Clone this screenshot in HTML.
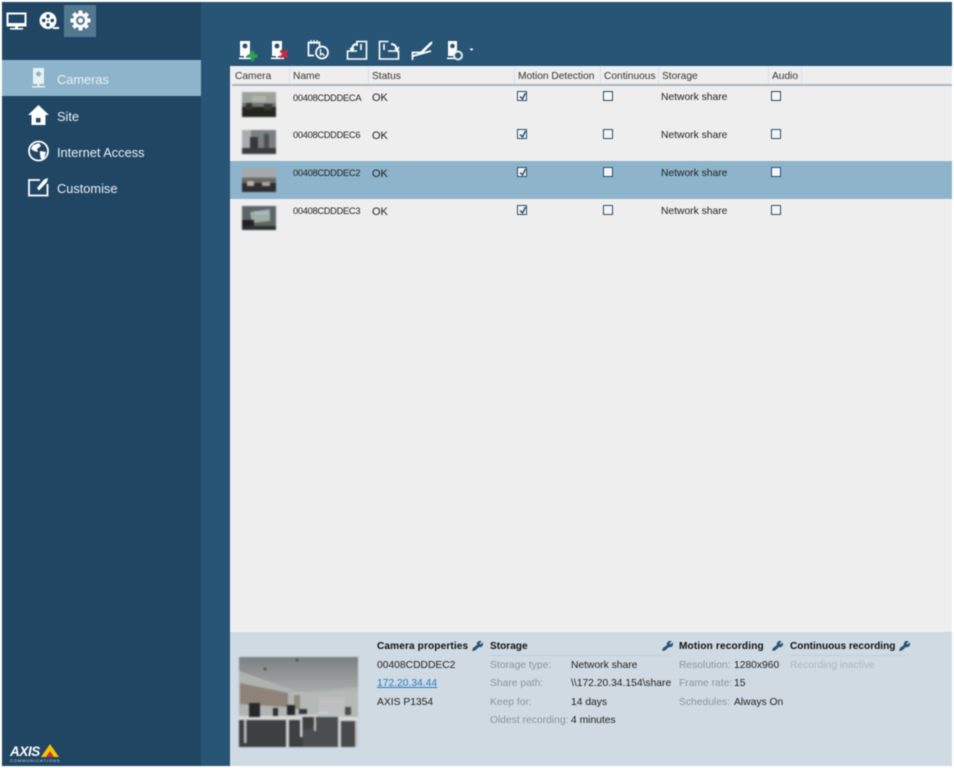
<!DOCTYPE html>
<html><head><meta charset="utf-8">
<style>
html,body{margin:0;padding:0;background:#fff}
#p{position:relative;width:954px;height:768px;overflow:hidden;background:#fff;font-family:"Liberation Sans",sans-serif;font-size:10.3px;color:#222;filter:blur(.45px)}
#p div,#p svg,#p a{position:absolute}
.t{white-space:nowrap;line-height:14px}
.n{color:#e8f0f5;font-size:12.8px;line-height:18px;white-space:nowrap;left:57px}
.h{top:70px;color:#333;font-size:10.2px}
.sep{top:67px;width:1px;height:17px;background:#d6e2ea}
.cb{width:8px;height:8px;border:1.500px solid #2b4f6b;background:#f4f6f7}
.g{color:#8a969e}
.b{font-weight:bold;color:#111;font-size:10.1px}
.id{font-size:9.3px;letter-spacing:-.3px;left:293px}
.ph{filter:blur(.7px)}
</style></head><body><div id="p">
<div style="left:2px;top:2px;width:199px;height:764px;background:#214664"></div>
<div style="left:201px;top:2px;width:751px;height:764px;background:#285475"></div>
<div style="left:230px;top:66px;width:722px;height:566px;background:#eeeeee"></div>
<div style="left:230px;top:632px;width:722px;height:134px;background:#cfdae2"></div>

<!-- top icons -->
<div style="left:64px;top:5px;width:32px;height:32px;background:#527790"></div>
<svg style="left:0;top:0" width="100" height="40" viewBox="0 0 100 40">
<rect x="7.500" y="13.500" width="18" height="12" fill="none" stroke="#fff" stroke-width="2"/>
<rect x="7" y="23" width="19" height="3" fill="#fff"/><rect x="15" y="26" width="3" height="2" fill="#fff"/><rect x="10" y="28" width="13" height="1.600" fill="#fff"/>
<circle cx="48" cy="20.500" r="8.500" fill="#fff"/>
<g fill="#214664"><circle cx="48" cy="16.200" r="1.800"/><circle cx="48" cy="24.800" r="1.800"/><circle cx="43.700" cy="20.500" r="1.800"/><circle cx="52.300" cy="20.500" r="1.800"/><circle cx="48" cy="20.500" r=".8"/></g>
<rect x="53" y="27" width="6" height="2" fill="#fff"/>
<g fill="#fff" transform="translate(80.500 20.500)"><circle r="7.500"/><rect x="-2" y="-10" width="4" height="20"/><rect x="-2" y="-10" width="4" height="20" transform="rotate(45)"/><rect x="-2" y="-10" width="4" height="20" transform="rotate(90)"/><rect x="-2" y="-10" width="4" height="20" transform="rotate(135)"/><circle r="4.500" fill="#527790"/><circle r="2.500"/></g>
</svg>

<!-- sidebar -->
<div style="left:2px;top:60px;width:199px;height:36px;background:#8db4cb"></div>
<svg style="left:26px;top:66px" width="26" height="24" viewBox="0 0 26 24">
<rect x="7" y="2" width="11" height="16" fill="#e9f0f4"/><circle cx="12.500" cy="8" r="2.500" fill="#8db4cb"/><rect x="6" y="20" width="13" height="1.500" fill="#e9f0f4"/><rect x="11.500" y="18" width="2" height="2" fill="#e9f0f4"/>
</svg>
<div class="n" style="top:71px">Cameras</div>
<svg style="left:26px;top:103px" width="26" height="24" viewBox="0 0 26 24">
<path d="M12.500 2 L23 12 H19.500 V22 H5.500 V12 H2 Z" fill="#fff"/><rect x="10" y="15" width="4.500" height="4.500" fill="#214664"/>
</svg>
<div class="n" style="top:108px">Site</div>
<svg style="left:26px;top:139px" width="26" height="24" viewBox="0 0 26 24">
<circle cx="12.500" cy="12" r="9.500" fill="none" stroke="#fff" stroke-width="1.800"/>
<path d="M7 6 L13 4 L15 7 L11 10 L12 13 L8 12 L5 10 Z M14 12 L20 13 L18 19 L15 20 L14 16 Z" fill="#fff"/>
</svg>
<div class="n" style="top:144px">Internet Access</div>
<svg style="left:26px;top:175px" width="26" height="24" viewBox="0 0 26 24">
<path d="M14 5 H3 V20.500 H21.500 V9" fill="none" stroke="#fff" stroke-width="1.800"/>
<path d="M11 13 L18 4.500 L22 3 L21 7 L13 15.500 Z" fill="#fff"/>
</svg>
<div class="n" style="top:180px">Customise</div>

<!-- logo -->
<div class="t" style="left:10px;top:745px;color:#fff;font-weight:bold;font-style:italic;font-size:13.500px;letter-spacing:-.4px">AXIS</div>
<svg style="left:40px;top:742px" width="20" height="18" viewBox="0 0 20 18"><path d="M10 2 L19 15 H1 Z" fill="#f5c400"/><path d="M10 9 L14 15 H6 Z" fill="#c9302c"/></svg>
<div class="t" style="left:10px;top:758px;color:#dde;font-size:4px;line-height:5px;letter-spacing:.95px">COMMUNICATIONS</div>

<!-- toolbar -->
<svg style="left:230px;top:36px" width="260" height="30" viewBox="0 0 260 30" fill="none" stroke="#fff">
<g stroke="none" fill="#fff"><rect x="10" y="5" width="10" height="15"/><circle cx="15" cy="10" r="2.500" fill="#285475"/><rect x="9" y="21.500" width="13" height="1.600"/><rect x="14" y="20" width="2" height="2"/></g>
<path d="M22.500 15v10M17.500 20h10" stroke="#2aa14f" stroke-width="3.500"/>
<g stroke="none" fill="#fff"><rect x="42" y="5" width="10" height="15"/><circle cx="47" cy="10" r="2.500" fill="#285475"/><rect x="41" y="21.500" width="13" height="1.600"/><rect x="46" y="20" width="2" height="2"/></g>
<path d="M50.500 14.500l7 7M57.500 14.500l-7 7" stroke="#d5263b" stroke-width="2.800"/>
<path d="M84 19.500H78.500V6.500H89.500V10" stroke-width="1.700"/><path d="M81 4v4M84 4v4M87 4v4" stroke-width="1.200"/>
<circle cx="92" cy="16.500" r="6" stroke-width="1.700"/><path d="M90.500 13v6l2-1.500 2 2.500" stroke-width="1.300"/>
<path d="M127 10V5.500H136.500V23H117.500V15H127" stroke-width="1.600"/><path d="M122 14c0-4 2-6 5-6" stroke-width="2"/><path d="M120 12l2 3 2-3" stroke-width="1.400"/><path d="M131 8v6" stroke-width="1.600"/>
<path d="M149.500 15V5.500H158.500M149.500 15V23H168.500V15H158" stroke-width="1.600"/><path d="M161 8c3 0 5 2 6 5" stroke-width="2"/><path d="M165 12l2 3 2-4" stroke-width="1.400"/><path d="M154 8v6" stroke-width="1.600"/>
<path d="M182.500 24V16.500H191M183 20L201 15" stroke-width="1.700"/><path d="M190 16L200 6.500 202.500 5 202 8 193 17z" fill="#fff" stroke="none"/>
<g stroke="none" fill="#fff"><rect x="218" y="5" width="9" height="15"/><circle cx="222.500" cy="10" r="2.300" fill="#285475"/><rect x="217" y="21.500" width="11" height="1.600"/></g>
<circle cx="228" cy="19.500" r="4" fill="#285475" stroke="#dfe8ee" stroke-width="2"/>
<path d="M239.500 12.500h4l-2 2.500z" fill="#fff" stroke="none"/>
</svg>

<!-- table header -->
<div style="left:232px;top:84px;width:720px;height:2px;background:#a9b7c0"></div>
<div class="sep" style="left:289px"></div><div class="sep" style="left:368px"></div><div class="sep" style="left:514px"></div><div class="sep" style="left:600px"></div><div class="sep" style="left:658px"></div><div class="sep" style="left:768px"></div><div class="sep" style="left:801px"></div>
<div class="t h" style="left:235px">Camera</div>
<div class="t h" style="left:293px">Name</div>
<div class="t h" style="left:372px">Status</div>
<div class="t h" style="left:518px">Motion Detection</div>
<div class="t h" style="left:604px">Continuous</div>
<div class="t h" style="left:662px">Storage</div>
<div class="t h" style="left:772px">Audio</div>

<!-- selected row -->
<div style="left:230px;top:161px;width:722px;height:38px;background:#8db4cb"></div>

<!-- rows -->
<svg class="ph" style="left:242px;top:92px" width="34" height="25" viewBox="0 0 34 25"><rect width="34" height="25" fill="#6c726e"/><rect y="0" width="34" height="11" fill="#9aa39c"/><rect x="10" y="4" width="14" height="6" fill="#aeb4a6"/><rect y="15" width="34" height="10" fill="#23251f"/><rect x="4" y="11" width="6" height="7" fill="#333"/><rect x="22" y="12" width="8" height="6" fill="#3c3c38"/></svg>
<svg class="ph" style="left:242px;top:130px" width="34" height="24" viewBox="0 0 34 24"><rect width="34" height="24" fill="#7b7f80"/><rect x="0" y="0" width="9" height="24" fill="#a8acae"/><rect x="8" y="7" width="8" height="12" fill="#35383a"/><rect x="22" y="4" width="5" height="16" fill="#4d4f4e"/><rect y="18" width="34" height="6" fill="#3a3c3d"/></svg>
<svg class="ph" style="left:242px;top:168px" width="34" height="24" viewBox="0 0 34 24"><rect width="34" height="24" fill="#8a8f92"/><rect width="34" height="9" fill="#a5a9ab"/><rect y="10" width="34" height="5" fill="#6b6760"/><rect y="15" width="34" height="9" fill="#2c2e30"/><rect x="5" y="13" width="7" height="5" fill="#b4b4b4"/><rect x="20" y="14" width="8" height="4" fill="#a8a8a8"/></svg>
<svg class="ph" style="left:242px;top:206px" width="34" height="24" viewBox="0 0 34 24"><rect width="34" height="24" fill="#5c6466"/><path d="M8 6 L28 3 V15 L10 17Z" fill="#9fae9f"/><rect x="12" y="5" width="14" height="4" fill="#a7b7c9"/><rect y="14" width="12" height="10" fill="#1e2223"/><rect y="20" width="34" height="4" fill="#2c3032"/></svg>

<div class="t id" style="top:91px">00408CDDDECA</div><div class="t" style="left:372px;top:91px;font-size:11px">OK</div>
<div class="t id" style="top:128px">00408CDDDEC6</div><div class="t" style="left:372px;top:129px;font-size:11px">OK</div>
<div class="t id" style="top:166px">00408CDDDEC2</div><div class="t" style="left:372px;top:167px;font-size:11px">OK</div>
<div class="t id" style="top:204px">00408CDDDEC3</div><div class="t" style="left:372px;top:205px;font-size:11px">OK</div>

<div class="t" style="left:661px;top:91px">Network share</div>
<div class="t" style="left:661px;top:129px">Network share</div>
<div class="t" style="left:661px;top:167px">Network share</div>
<div class="t" style="left:661px;top:205px">Network share</div>

<div class="cb" style="left:517px;top:91px"></div><div class="cb" style="left:603px;top:91px"></div><div class="cb" style="left:771px;top:91px"></div>
<div class="cb" style="left:517px;top:129px"></div><div class="cb" style="left:603px;top:129px"></div><div class="cb" style="left:771px;top:129px"></div>
<div class="cb" style="left:517px;top:167px"></div><div class="cb" style="left:603px;top:167px"></div><div class="cb" style="left:771px;top:167px"></div>
<div class="cb" style="left:517px;top:205px"></div><div class="cb" style="left:603px;top:205px"></div><div class="cb" style="left:771px;top:205px"></div>
<svg style="left:517px;top:91px" width="12" height="12" fill="none" stroke="#2b4f6b" stroke-width="1.500"><path d="M3 5.500l2.500 2.500 3-6"/></svg>
<svg style="left:517px;top:129px" width="12" height="12" fill="none" stroke="#2b4f6b" stroke-width="1.500"><path d="M3 5.500l2.500 2.500 3-6"/></svg>
<svg style="left:517px;top:167px" width="12" height="12" fill="none" stroke="#2b4f6b" stroke-width="1.500"><path d="M3 5.500l2.500 2.500 3-6"/></svg>
<svg style="left:517px;top:205px" width="12" height="12" fill="none" stroke="#2b4f6b" stroke-width="1.500"><path d="M3 5.500l2.500 2.500 3-6"/></svg>

<!-- bottom panel -->
<svg class="ph" style="left:239px;top:657px" width="119" height="90" viewBox="0 0 119 90">
<defs><linearGradient id="c" x1="0" y1="0" x2="0" y2="1"><stop offset="0" stop-color="#7b8081"/><stop offset="1" stop-color="#a9adab"/></linearGradient></defs>
<rect width="119" height="90" fill="#b0b4b2"/>
<path d="M0 0H119V30L62 36 0 14Z" fill="url(#c)"/>
<path d="M0 14 L50 34 V38 L0 26Z" fill="#aeb2b0"/>
<path d="M1 26 L49 36 V50 L1 47Z" fill="#8f8279"/>
<path d="M53 35H119V62H53Z" fill="#b4b8b6"/>
<rect x="55" y="38" width="6" height="14" fill="#8f8d78"/>
<rect x="80" y="40" width="26" height="22" fill="#bdc0be"/>
<circle cx="26" cy="12" r="1.300" fill="#3a3e3f"/><circle cx="58" cy="3" r="1.300" fill="#3a3e3f"/>
<rect x="50" y="60" width="50" height="30" fill="#4b4e50"/>
<path d="M0 60H62L64 90H0Z" fill="#3d3f41"/>
<path d="M62 60H80L72 72H62Z" fill="#3d3f41"/>
<rect x="0" y="59" width="62" height="4" fill="#d6d8d7"/>
<rect x="61" y="57.500" width="18" height="2.500" fill="#cfd1d0"/><rect x="79" y="55" width="10" height="2" fill="#cfd1d0"/>
<rect x="99" y="60" width="20" height="5" fill="#d8dad9"/>
<rect x="99" y="64" width="20" height="26" fill="#47494b"/>
<rect x="99" y="62" width="3" height="28" fill="#cfd1d0"/><rect x="116" y="64" width="3" height="26" fill="#bfc1c0"/>
<rect x="47" y="60" width="3" height="30" fill="#d0d2d1"/><rect x="61" y="60" width="2.500" height="20" fill="#d0d2d1"/><rect x="75" y="58" width="2" height="16" fill="#c8cac9"/><rect x="5" y="62" width="2.500" height="24" fill="#bfc1c0"/>
<rect x="10" y="46" width="11" height="14" fill="#25282a"/><rect x="48" y="48" width="8" height="10" fill="#25282a"/><rect x="34" y="51" width="5" height="8" fill="#2c2f30"/><rect x="60" y="52" width="8" height="5" fill="#33363a"/>
<rect x="106" y="50" width="6" height="8" fill="#4a4c4e"/>
</svg>

<div class="t b" style="left:377px;top:640px;letter-spacing:.12px">Camera properties</div>
<div class="t b" style="left:490px;top:640px">Storage</div>
<div class="t b" style="left:679px;top:640px;letter-spacing:.15px">Motion recording</div>
<div class="t b" style="left:790px;top:640px">Continuous recording</div>
<div style="left:490px;top:655px;width:180px;height:1px;background:#c3d0d9"></div>
<div style="left:790px;top:655px;width:118px;height:1px;background:#c3d0d9"></div>
<svg style="left:471px;top:640px" width="12" height="12" viewBox="0 0 12 12"><path d="M1 11 L2 8 L6 5 A3 3 0 0 1 10.500 1.500 L8.500 3.500 L9.500 4.500 L11.500 2.500 A3 3 0 0 1 8 7 L4 10.500Z" fill="#285475"/></svg>
<svg style="left:661px;top:640px" width="12" height="12" viewBox="0 0 12 12"><path d="M1 11 L2 8 L6 5 A3 3 0 0 1 10.500 1.500 L8.500 3.500 L9.500 4.500 L11.500 2.500 A3 3 0 0 1 8 7 L4 10.500Z" fill="#285475"/></svg>
<svg style="left:771px;top:640px" width="12" height="12" viewBox="0 0 12 12"><path d="M1 11 L2 8 L6 5 A3 3 0 0 1 10.500 1.500 L8.500 3.500 L9.500 4.500 L11.500 2.500 A3 3 0 0 1 8 7 L4 10.500Z" fill="#285475"/></svg>
<svg style="left:898px;top:640px" width="12" height="12" viewBox="0 0 12 12"><path d="M1 11 L2 8 L6 5 A3 3 0 0 1 10.500 1.500 L8.500 3.500 L9.500 4.500 L11.500 2.500 A3 3 0 0 1 8 7 L4 10.500Z" fill="#285475"/></svg>

<div class="t" style="left:377px;top:659px">00408CDDDEC2</div>
<a class="t" style="left:377px;top:677px;color:#2a78c2;text-decoration:underline">172.20.34.44</a>
<div class="t" style="left:377px;top:696px">AXIS P1354</div>

<div class="t g" style="left:490px;top:659px">Storage type:</div><div class="t" style="left:571px;top:659px">Network share</div>
<div class="t g" style="left:490px;top:677px">Share path:</div><div class="t" style="left:571px;top:677px">\\172.20.34.154\share</div>
<div class="t g" style="left:490px;top:696px">Keep for:</div><div class="t" style="left:571px;top:696px">14 days</div>
<div class="t g" style="left:490px;top:714px">Oldest recording:</div><div class="t" style="left:571px;top:714px">4 minutes</div>

<div class="t g" style="left:679px;top:659px">Resolution:</div><div class="t" style="left:734px;top:659px">1280x960</div>
<div class="t g" style="left:679px;top:677px">Frame rate:</div><div class="t" style="left:734px;top:677px">15</div>
<div class="t g" style="left:679px;top:696px">Schedules:</div><div class="t" style="left:734px;top:696px">Always On</div>

<div class="t" style="left:790px;top:659px;color:#adb8c0">Recording inactive</div>
</div></body></html>
